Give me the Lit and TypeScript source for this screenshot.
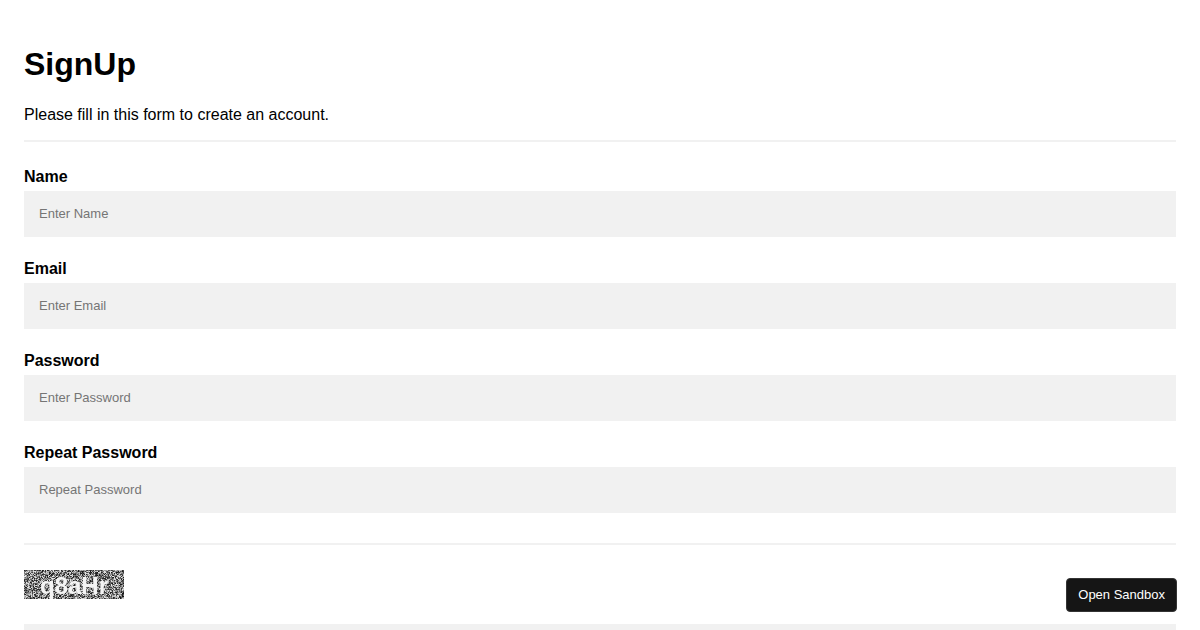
import { LitElement, html, css } from "lit";
import { customElement } from "lit/decorators.js";

interface Field {
  id: string;
  label: string;
  placeholder: string;
  type: string;
}

const FIELDS: Field[] = [
  { id: "name", label: "Name", placeholder: "Enter Name", type: "text" },
  { id: "email", label: "Email", placeholder: "Enter Email", type: "text" },
  { id: "psw", label: "Password", placeholder: "Enter Password", type: "password" },
  { id: "psw-repeat", label: "Repeat Password", placeholder: "Repeat Password", type: "password" },
];

/** Captcha: a code over random grey static. */
@customElement("captcha-code")
export class CaptchaCode extends LitElement {
  static styles = css`
    :host {
      display: grid;
      width: 100px;
      height: 29px;
      overflow: hidden;
    }
    .noise,
    .code {
      grid-area: 1 / 1;
    }
    .noise {
      display: block;
    }
    .code {
      z-index: 1;
      text-align: center;
      color: #f4f4f4;
      font-family: "Liberation Sans", Arial, sans-serif;
      font-size: 24px;
      font-weight: bold;
      line-height: 31px;
    }
  `;

  firstUpdated() {
    const canvas = this.renderRoot.querySelector("canvas") as HTMLCanvasElement;
    const ctx = canvas.getContext("2d")!;
    const image = ctx.createImageData(canvas.width, canvas.height);
    let seed = 20231;
    for (let i = 0; i < image.data.length; i += 4) {
      seed = (Math.imul(seed, 1664525) + 1013904223) >>> 0;
      const grey = 20 + (seed >>> 24) * 0.84;
      image.data[i] = image.data[i + 1] = image.data[i + 2] = grey;
      image.data[i + 3] = 255;
    }
    ctx.putImageData(image, 0, 0);
  }

  render() {
    return html`
      <canvas class="noise" width="100" height="29" aria-hidden="true"></canvas>
      <span class="code">q8aHr</span>
    `;
  }
}

@customElement("app-root")
export class AppRoot extends LitElement {
  static styles = css`
    :host {
      display: block;
      height: 100vh;
      overflow-y: auto;
      scrollbar-width: none;
      background: #fff;
      color: #000;
      font-family: "Liberation Sans", Arial, Helvetica, sans-serif;
      font-size: 16px;
      line-height: 20px;
    }
    * {
      box-sizing: border-box;
    }
    .form {
      padding: 24px;
    }
    .title {
      margin: 21px 0 22px;
      font-size: 32px;
      line-height: 38px;
    }
    .intro {
      margin: 0 0 15px;
    }
    .rule {
      height: 2px;
      margin: 0 0 25px;
      border: 0;
      background: #f1f1f1;
    }
    .label {
      display: block;
      font-weight: bold;
    }
    .input {
      display: block;
      width: 100%;
      height: 46px;
      margin: 4px 0 22px;
      padding: 14px 15px 16px;
      border: none;
      border-radius: 0;
      outline: none;
      background: #f1f1f1;
      font-family: inherit;
      font-size: 13px;
    }
    .input::placeholder {
      color: #757575;
    }
    .rule.lower {
      margin-top: 30px;
    }
    .captcha-input {
      margin-top: 25px;
    }
    .sandbox {
      position: fixed;
      right: 23px;
      bottom: 18px;
      height: 34px;
      padding: 0 11px 2px;
      border: 1px solid #343434;
      border-radius: 4px;
      background: #151515;
      color: #fff;
      font-family: inherit;
      font-size: 13px;
      cursor: pointer;
    }
  `;

  render() {
    return html`
      <form class="form" @submit=${(e: Event) => e.preventDefault()}>
        <h1 class="title">SignUp</h1>
        <p class="intro">Please fill in this form to create an account.</p>
        <hr class="rule" />
        ${FIELDS.map(
          (f) => html`
            <label class="label" for=${f.id}>${f.label}</label>
            <input class="input" id=${f.id} name=${f.id} type=${f.type} placeholder=${f.placeholder} />
          `
        )}
        <hr class="rule lower" />
        <captcha-code></captcha-code>
        <input class="input captcha-input" name="captcha" type="text" aria-label="Captcha" />
      </form>
      <button class="sandbox" type="button">Open Sandbox</button>
    `;
  }
}
